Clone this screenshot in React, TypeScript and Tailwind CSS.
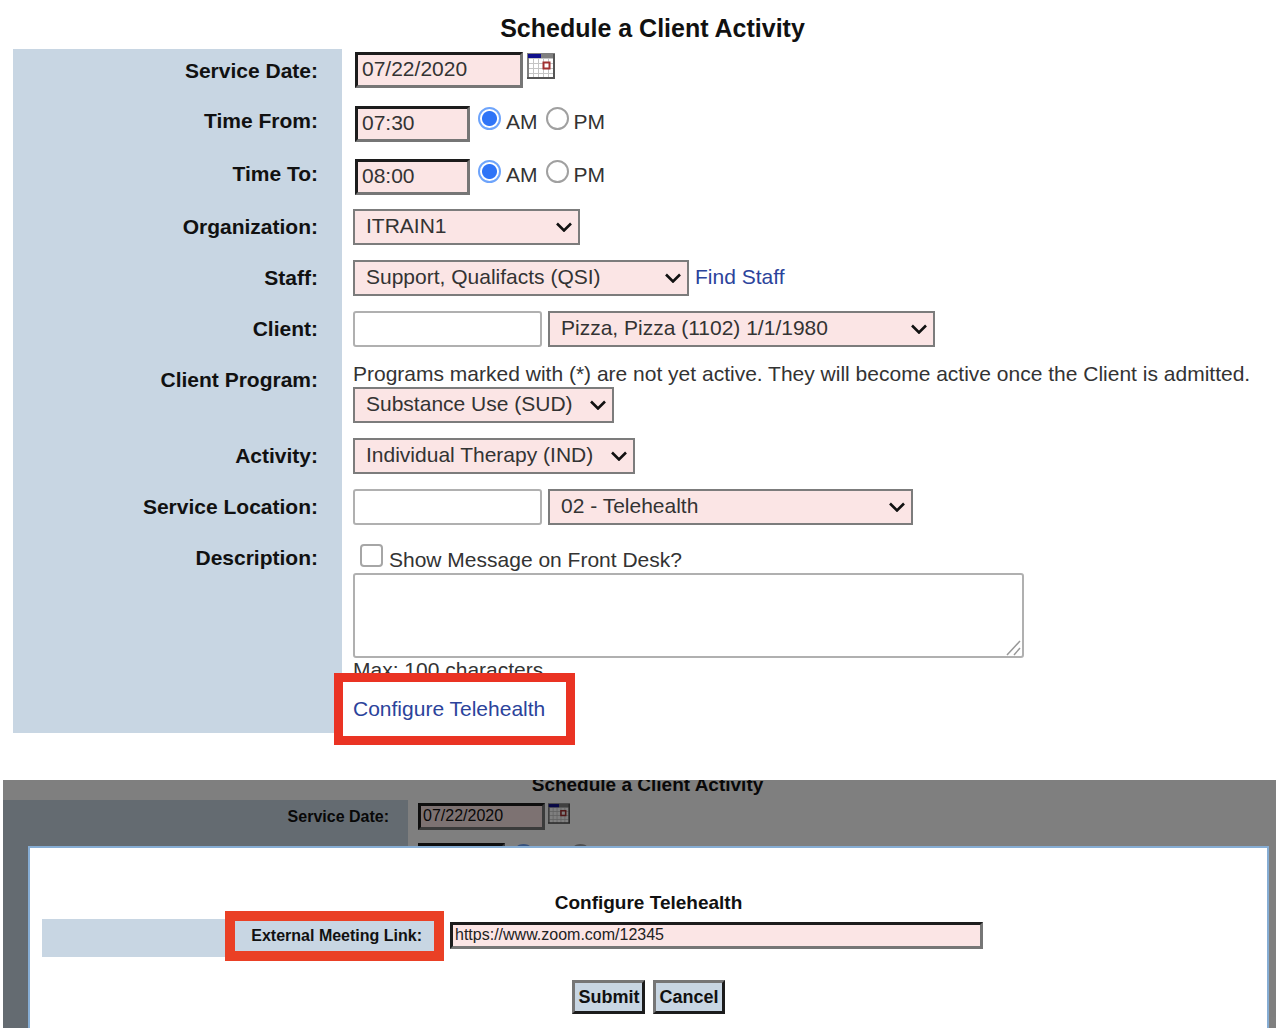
import React, { useState } from 'react';

const CalendarIcon: React.FC<{ className: string }> = ({ className }) => (
  <svg viewBox="0 0 28 26" className={className} aria-hidden="true">
    <rect x="0" y="0" width="28" height="26" fill="#c4c4c4" />
    {[2, 7, 12, 17, 22].map((x) =>
      [6, 11, 16, 21].map((y) => <rect key={`${x}-${y}`} x={x} y={y} width="4" height="4" fill="#fff" />)
    )}
    <rect x="0" y="0" width="28" height="5" fill="#808080" />
    <rect x="1" y="1" width="13" height="4" fill="#10108c" />
    <rect x="16.500" y="9.500" width="6" height="6" fill="#fff" stroke="#a03030" strokeWidth="2" />
    <path d="M1 5V25" stroke="#808080" strokeWidth="2" />
    <path d="M0 25H28M27 1V26" stroke="#555" strokeWidth="2" fill="none" />
  </svg>
);

const inset =
  'rounded-none border-[3px] border-t-[#1c1c1c] border-l-[#1c1c1c] border-r-[#767676] border-b-[#767676] bg-[#fbe5e5] outline-none';

interface SelectProps {
  id: string;
  className: string;
  options: string[];
  label?: string;
}

const PinkSelect: React.FC<SelectProps> = ({ id, className, options, label }) => (
  <div className={`relative ${className}`}>
    <select
      id={id}
      aria-label={label}
      className="block h-9 w-full appearance-none rounded-none border-2 border-[#7c7c7c] bg-[#fbe5e5] pb-0.5 pl-[11px] text-[21px] leading-[28px] outline-none"
    >
      {options.map((option) => (
        <option key={option}>{option}</option>
      ))}
    </select>
    <svg
      viewBox="0 0 16 10"
      className="pointer-events-none absolute top-[13px] right-2 h-[10px] w-4"
      fill="none"
      stroke="#111"
      strokeWidth="2.6"
      aria-hidden="true"
    >
      <path d="M1 1.500L8 8.500L15 1.500" />
    </svg>
  </div>
);

interface RowProps {
  label?: string;
  htmlFor?: string;
  className: string;
  children: React.ReactNode;
}

const Row: React.FC<RowProps> = ({ label, htmlFor, className, children }) => (
  <div className="flex">
    <div className="w-[329px] shrink-0 bg-[#c8d6e3] pt-2 pr-6 text-right leading-7 font-bold text-[#111]">
      <label htmlFor={htmlFor}>{label}</label>
    </div>
    <div className={`min-w-0 flex-1 pl-[11px] ${className}`}>{children}</div>
  </div>
);

interface TimeProps {
  id: string;
  value: string;
}

const radio =
  'mt-px h-[23px] w-[23px] appearance-none rounded-full border-2 border-[#a0a0a0] bg-white checked:border-[#6ea4fb] checked:bg-[radial-gradient(circle,#2f74f7_7px,#fff_8px)]';

const TimeField: React.FC<TimeProps> = ({ id, value }) => {
  const [time, setTime] = useState(value);

  return (
    <div className="ml-0.5 flex items-start">
      <input
        id={id}
        type="text"
        value={time}
        onChange={(e) => setTime(e.target.value)}
        className={`${inset} h-9 w-[115px] px-1 pb-0.5`}
      />
      <label className="ml-2 flex items-start gap-[5px]">
        <input type="radio" name={`${id}-period`} defaultChecked className={radio} />
        <span className="pt-1 leading-6">AM</span>
      </label>
      <label className="ml-2 flex items-start gap-[5px]">
        <input type="radio" name={`${id}-period`} className={radio} />
        <span className="pt-1 leading-6">PM</span>
      </label>
    </div>
  );
};

const plain = 'h-9 w-[189px] rounded-[3px] border-2 border-[#b0b0b0] bg-white px-2 outline-none';

const ActivityForm: React.FC = () => (
  <form className="pl-[13px] text-[21px] text-[#333]">
    <h1 className="pt-3 pb-[5px] pl-4 text-center text-[25px] leading-8 font-bold text-[#111]">
      Schedule a Client Activity
    </h1>
    <Row label="Service Date:" htmlFor="service-date" className="pt-[3px] pb-[11px]">
      <div className="ml-0.5 flex items-start gap-1">
        <input
          id="service-date"
          type="text"
          defaultValue="07/22/2020"
          className={`${inset} h-9 w-[168px] px-1 pb-0.5`}
        />
        <button type="button" aria-label="Pick a date">
          <CalendarIcon className="h-7 w-7" />
        </button>
      </div>
    </Row>
    <Row label="Time From:" htmlFor="time-from" className="pt-[7px] pb-[10px]">
      <TimeField id="time-from" value="07:30" />
    </Row>
    <Row label="Time To:" htmlFor="time-to" className="pt-[7px] pb-[10px]">
      <TimeField id="time-to" value="08:00" />
    </Row>
    <Row label="Organization:" htmlFor="organization" className="pt-1 pb-[11px]">
      <PinkSelect id="organization" className="w-[227px]" options={['ITRAIN1']} />
    </Row>
    <Row label="Staff:" htmlFor="staff" className="pt-1 pb-[11px]">
      <div className="flex gap-[6px]">
        <PinkSelect id="staff" className="w-[336px]" options={['Support, Qualifacts (QSI)']} />
        <a href="#find-staff" className="leading-[34px] text-[#2b439b]">
          Find Staff
        </a>
      </div>
    </Row>
    <Row label="Client:" htmlFor="client" className="pt-1 pb-[11px]">
      <div className="flex gap-[6px]">
        <input id="client" type="text" className={plain} />
        <PinkSelect
          id="client-match"
          label="Matching clients"
          className="w-[387px]"
          options={['Pizza, Pizza (1102) 1/1/1980']}
        />
      </div>
    </Row>
    <Row label="Client Program:" htmlFor="program" className="pt-0.5 pb-[11px]">
      <p className="leading-[27px]">
        Programs marked with (*) are not yet active. They will become active once the Client is admitted.
      </p>
      <PinkSelect id="program" className="w-[261px]" options={['Substance Use (SUD)']} />
    </Row>
    <Row label="Activity:" htmlFor="activity" className="pt-1 pb-[11px]">
      <PinkSelect id="activity" className="w-[282px]" options={['Individual Therapy (IND)']} />
    </Row>
    <Row label="Service Location:" htmlFor="location" className="pt-1 pb-[11px]">
      <div className="flex gap-[6px]">
        <input id="location" type="text" className={plain} />
        <PinkSelect
          id="location-match"
          label="Matching locations"
          className="w-[365px]"
          options={['02 - Telehealth']}
        />
      </div>
    </Row>
    <Row label="Description:" htmlFor="description" className="pt-2 pb-3">
      <label className="ml-[7px] flex h-[29px] gap-[6px]">
        <input
          type="checkbox"
          className="h-[23px] w-[23px] appearance-none rounded-[4px] border-2 border-[#a6a6a6] bg-white checked:bg-[#2f74f7]"
        />
        <span className="pt-1 leading-6">Show Message on Front Desk?</span>
      </label>
      <div className="relative w-[671px] max-w-full">
        <textarea
          id="description"
          maxLength={100}
          className="block h-[85px] w-full resize-none rounded-[3px] border-2 border-[#b0b0b0] px-2 outline-none"
        />
        <svg
          viewBox="0 0 16 16"
          className="pointer-events-none absolute right-[2px] bottom-[2px] h-4 w-4"
          stroke="#999"
          strokeWidth="1.5"
          aria-hidden="true"
        >
          <path d="M1 15L14 1M8 15L14 8" />
        </svg>
      </div>
      <p className="leading-6">Max: 100 characters</p>
      <div className="relative mt-[15px] w-fit leading-6">
        <a href="#configure-telehealth" className="text-[#2b439b]">
          Configure Telehealth
        </a>
        {/* highlight box */}
        <span className="pointer-events-none absolute -top-6 -right-[30px] -bottom-6 -left-[19px] border-[9px] border-[#ea3323]" />
      </div>
    </Row>
  </form>
);

// Page behind the dialog, dimmed
const DimmedPage: React.FC = () => (
  <div className="absolute inset-0 overflow-hidden bg-white text-base text-[#111]" inert>
    <h2 className="-mt-[7px] pb-[3px] pl-4 text-center text-[19px] leading-6 font-bold">
      Schedule a Client Activity
    </h2>
    <div className="flex h-full">
      <div className="w-[405px] shrink-0 bg-[#c8d6e3] pt-[5px] pr-[19px] text-right leading-6 font-bold">
        <label htmlFor="dimmed-date">Service Date:</label>
      </div>
      <div className="pt-[3px] pl-[10px]">
        <div className="flex items-start gap-[3px]">
          <input
            id="dimmed-date"
            type="text"
            defaultValue="07/22/2020"
            className={`${inset} h-[27px] w-[127px] px-0.5 pb-0.5`}
          />
          <button type="button" aria-label="Pick a date">
            <CalendarIcon className="h-[21px] w-[22px]" />
          </button>
        </div>
        <div className="mt-[13px] flex items-start gap-[34px]">
          <input type="text" aria-label="Time From" className={`${inset} -mr-[27px] h-[27px] w-[87px]`} />
          <input type="radio" name="dimmed-period" aria-label="AM" defaultChecked className={radio} />
          <input type="radio" name="dimmed-period" aria-label="PM" className={radio} />
        </div>
      </div>
    </div>
    <div className="absolute inset-0 bg-black/50" />
  </div>
);

const buttonStyle =
  'h-[34px] border-[3px] border-t-[#767676] border-l-[#767676] border-r-[#1c1c1c] border-b-[#1c1c1c] bg-[#c8d6e3] px-[3px] text-lg leading-7 font-bold text-[#111]';

const TelehealthDialog: React.FC = () => {
  const [link, setLink] = useState('https://www.zoom.com/12345');

  return (
    <div
      role="dialog"
      aria-labelledby="dialog-title"
      className="relative mt-[66px] mr-[7px] ml-[25px] border-2 border-b-0 border-[#86add4] bg-white px-3 pt-[43px] pb-[14px] text-base text-[#111]"
    >
      <h2 id="dialog-title" className="pb-1 text-center text-[19px] leading-6 font-bold">
        Configure Telehealth
      </h2>
      <div className="flex">
        <div className="flex h-[38px] w-[402px] shrink-0 justify-end bg-[#c8d6e3]">
          <div className="relative px-[22px] leading-[34px] font-bold">
            <label htmlFor="meeting-link">External Meeting Link:</label>
            {/* highlight box */}
            <span className="pointer-events-none absolute -top-2 right-0 -bottom-1 -left-1 border-[10px] border-[#ea4025]" />
          </div>
        </div>
        <input
          id="meeting-link"
          type="text"
          value={link}
          onChange={(e) => setLink(e.target.value)}
          className={`${inset} mt-[3px] ml-[6px] h-[27px] w-[533px] px-0.5 pb-0.5 text-[#222]`}
        />
      </div>
      <div className="mt-[23px] flex justify-center gap-2">
        <button type="button" className={buttonStyle}>
          Submit
        </button>
        <button type="button" className={buttonStyle}>
          Cancel
        </button>
      </div>
    </div>
  );
};

const App: React.FC = () => {
  return (
    <main className="bg-white font-['Liberation_Sans',Arial,sans-serif]">
      <ActivityForm />
      <div className="relative mt-[47px] ml-[3px] flow-root">
        <DimmedPage />
        <TelehealthDialog />
      </div>
    </main>
  );
};

export default App;
